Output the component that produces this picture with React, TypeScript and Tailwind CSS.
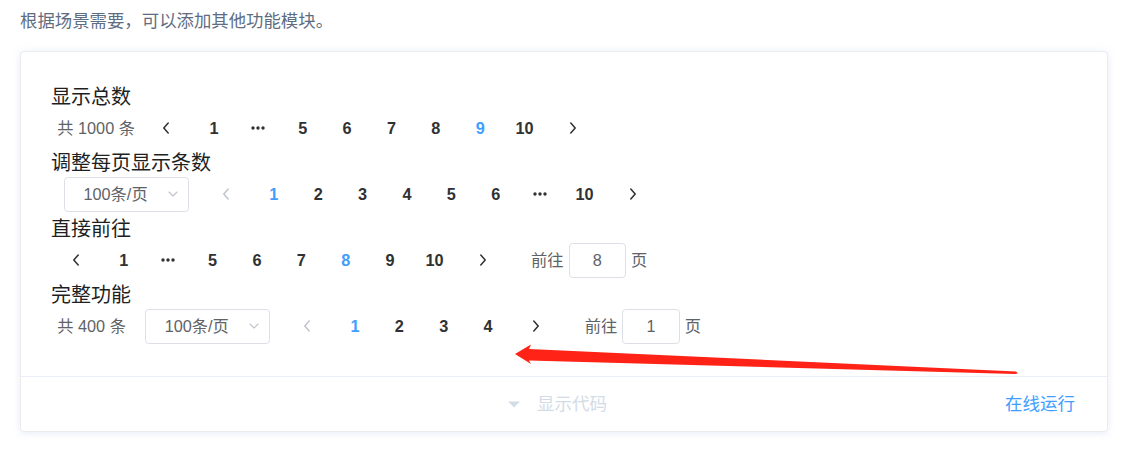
import type { ReactNode } from 'react'

const FONT = '"Liberation Sans", "Noto Sans CJK SC", Arial, sans-serif'

type Item = number | 'more'

function Chevron({ dir, disabled }: { dir: 'left' | 'right'; disabled?: boolean }) {
  const d = dir === 'left' ? 'M6.2 1 L1.8 6 L6.2 11' : 'M1.8 1 L6.2 6 L1.8 11'
  return (
    <svg width="8" height="12" viewBox="0 0 8 12" fill="none">
      <path d={d} stroke={disabled ? '#c0c4cc' : '#303133'} strokeWidth="1.5" strokeLinecap="round" strokeLinejoin="round" />
    </svg>
  )
}

function More() {
  return (
    <svg width="14" height="4" viewBox="0 0 14 4">
      <circle cx="2" cy="2" r="1.7" fill="#303133" />
      <circle cx="7" cy="2" r="1.7" fill="#303133" />
      <circle cx="12" cy="2" r="1.7" fill="#303133" />
    </svg>
  )
}

function Prev({ disabled }: { disabled?: boolean }) {
  return (
    <div className="flex h-[35px] w-[44.375px] items-center justify-center pl-[7.5px] pr-[15px]">
      <Chevron dir="left" disabled={disabled} />
    </div>
  )
}

function Next() {
  return (
    <div className="flex h-[35px] w-[44.375px] items-center justify-center pl-[15px] pr-[7.5px]">
      <Chevron dir="right" />
    </div>
  )
}

function Pager({ items, active }: { items: Item[]; active: number }) {
  return (
    <>
      {items.map((it, i) => (
        <div
          key={i}
          className={`flex h-[35px] w-[44.375px] items-center justify-center text-[16.25px] font-bold ${
            it === active ? 'text-[#409eff]' : 'text-[#303133]'
          }`}
        >
          {it === 'more' ? <More /> : it}
        </div>
      ))}
    </>
  )
}

function Total({ n }: { n: number }) {
  return <span className="mr-[12.5px] text-[16.25px] leading-[35px] text-[#606266]">共 {n} 条</span>
}

function Sizes() {
  return (
    <div className="mr-[12.5px]">
      <div className="mx-[6.25px] flex h-[35px] w-[125px] items-center rounded-[3.75px] border border-[#dcdfe6]">
        <span className="flex-1 pl-[19px] text-[16.25px] text-[#606266]">100条/页</span>
        <svg className="mr-[10px]" width="10" height="6" viewBox="0 0 10 6" fill="none">
          <path d="M1 1 L5 5 L9 1" stroke="#c0c4cc" strokeWidth="1.1" strokeLinecap="round" strokeLinejoin="round" />
        </svg>
      </div>
    </div>
  )
}

function Jumper({ value }: { value: number }) {
  return (
    <div className="ml-[30px] flex items-center text-[16.25px] text-[#606266]">
      <span>前往</span>
      <div className="mx-[2.5px] px-[2.5px]">
        <div className="flex h-[35px] w-[57.5px] items-center justify-center rounded-[3.75px] border border-[#dcdfe6]">
          {value}
        </div>
      </div>
      <span>页</span>
    </div>
  )
}

function Block({ title, children }: { title: string; children: ReactNode }) {
  return (
    <div className="pt-[5px]">
      <div className="h-[21px] text-[20px] leading-[21px] text-[#1f1f1f]">{title}</div>
      <div className="flex h-[40px] items-center px-[6.25px] py-[2.5px]">{children}</div>
    </div>
  )
}

export default function App() {
  return (
    <div className="relative h-[453px] w-[1148px] overflow-hidden bg-white pt-[8px]" style={{ fontFamily: FONT }}>
      <p className="mb-[16px] ml-[20px] text-[17.4px] leading-[27px] text-[#5e6d82]">根据场景需要，可以添加其他功能模块。</p>

      <div className="ml-[20px] w-[1088px] rounded-[4px] border border-[#ebebeb] bg-white shadow-[0_0_10px_0_rgba(232,237,250,0.6),0_2px_5px_0_rgba(232,237,250,0.5)]">
        <div className="p-[30px]">
          <Block title="显示总数">
            <Total n={1000} />
            <Prev />
            <Pager items={[1, 'more', 5, 6, 7, 8, 9, 10]} active={9} />
            <Next />
          </Block>
          <Block title="调整每页显示条数">
            <Sizes />
            <Prev disabled />
            <Pager items={[1, 2, 3, 4, 5, 6, 'more', 10]} active={1} />
            <Next />
          </Block>
          <Block title="直接前往">
            <Prev />
            <Pager items={[1, 'more', 5, 6, 7, 8, 9, 10]} active={8} />
            <Next />
            <Jumper value={8} />
          </Block>
          <Block title="完整功能">
            <Total n={400} />
            <Sizes />
            <Prev disabled />
            <Pager items={[1, 2, 3, 4]} active={1} />
            <Next />
            <Jumper value={1} />
          </Block>
        </div>

        {/* demo-block-control */}
        <div className="grid h-[55px] grid-cols-[1fr_auto_1fr] items-center border-t border-[#eaeefb]">
          <div />
          <div className="flex items-center gap-[17px] pr-[13px]">
            <svg width="12" height="7" viewBox="0 0 12 7">
              <polygon points="0,0.5 12,0.5 6,6.5" fill="#d3dce6" />
            </svg>
            <span className="text-[17.5px] text-[#d3dce6]">显示代码</span>
          </div>
          <div className="flex justify-end pr-[32px]">
            <span className="text-[17.5px] text-[#409eff]">在线运行</span>
          </div>
        </div>
      </div>

      {/* annotation arrow */}
      <svg className="pointer-events-none absolute left-0 top-0" width="1148" height="453" viewBox="0 0 1148 453">
        <polygon
          points="515,354 531,344.5 529,349 1016,371.5 1018,373.2 1015,374 529,360.5 531,364"
          fill="#ff2317"
        />
      </svg>
    </div>
  )
}
